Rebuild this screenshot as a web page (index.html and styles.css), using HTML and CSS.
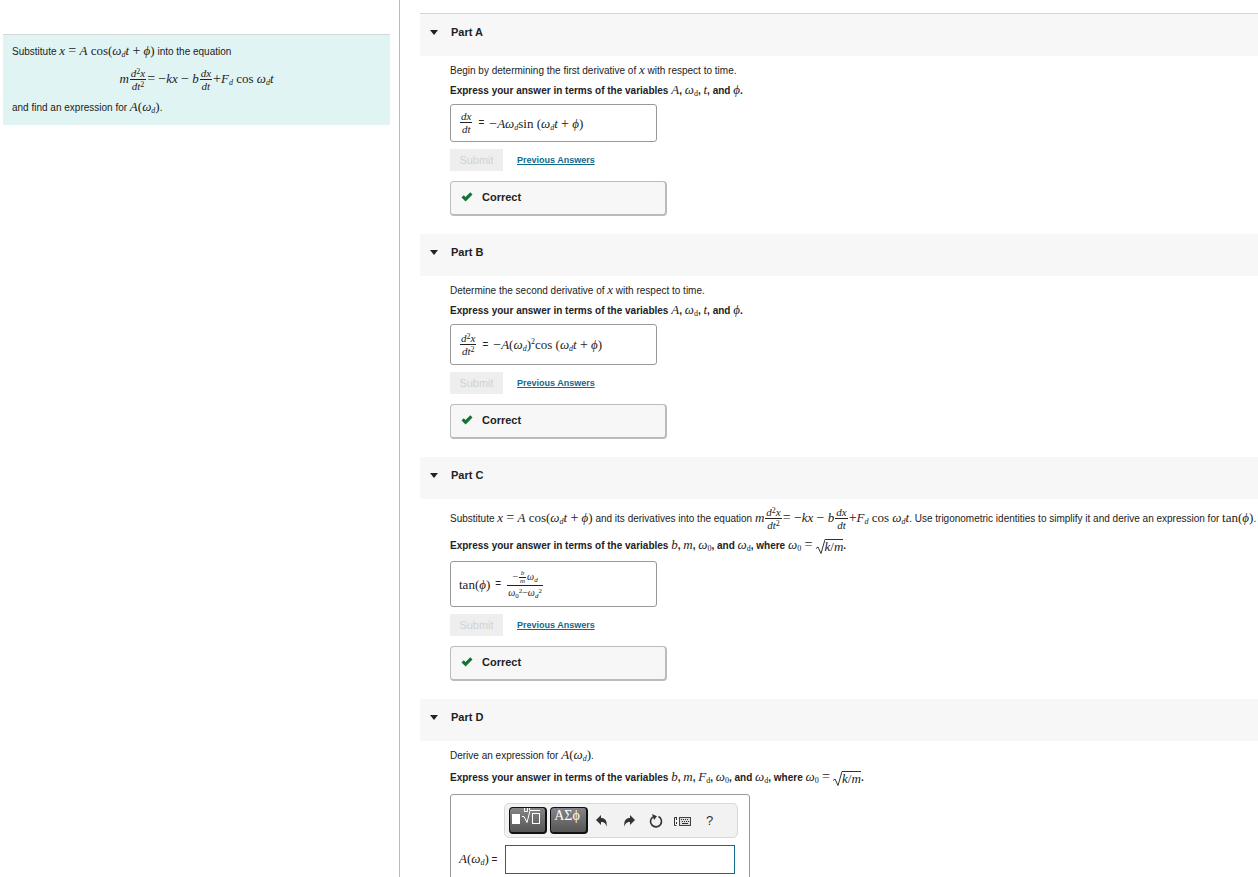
FILE: index.html
```html
<!DOCTYPE html>
<html lang="en">
<head>
    <meta charset="UTF-8">
    <meta name="viewport" content="width=device-width, initial-scale=1.0">
    <title>Driven Oscillator</title>
    <link rel="stylesheet" href="styles.css">
</head>
<body>

    <div class="page">
        <aside class="problem">
            <div class="intro">
                <p>Substitute <span class="math"><i>x</i> <b>=</b> <i>A</i> cos(<i>ω<sub>d</sub>t</i> <b>+</b> <i>ϕ</i>)</span> into the equation</p>
                <p class="equation"><span class="math"><i>m</i><span class="frac"><span><i>d</i><sup>2</sup><i>x</i></span><span><i>dt</i><sup>2</sup></span></span><b>=</b> <b>−</b><i>kx</i> <b>−</b> <i>b</i><span class="frac"><i>dx</i><i>dt</i></span><b>+</b><i>F<sub>d</sub></i> cos <i>ω<sub>d</sub>t</i></span></p>
                <p>and find an expression for <span class="math"><i>A</i>(<i>ω<sub>d</sub></i>)</span>.</p>
            </div>
        </aside>

        <main class="parts">
            <section class="part">
                <h2><button class="toggle" type="button"><span class="arrow"></span>Part A</button></h2>
                <div class="part-body">
                    <p>Begin by determining the first derivative of <span class="math"><i>x</i></span> with respect to time.</p>
                    <p class="hint">Express your answer in terms of the variables <span class="math"><i>A</i></span>, <span class="math"><i>ω</i><sub>d</sub></span>, <span class="math"><i>t</i></span>, and <span class="math"><i>ϕ</i></span>.</p>
                    <div class="answer short">
                        <span class="math"><span class="frac"><i>dx</i><i>dt</i></span></span>
                        <span class="eq">=</span>
                        <span class="math"><b>−</b><i>Aω<sub>d</sub></i>sin (<i>ω<sub>d</sub>t</i> <b>+</b> <i>ϕ</i>)</span>
                    </div>
                    <div class="actions">
                        <button class="submit" type="button" disabled>Submit</button>
                        <a href="#">Previous Answers</a>
                    </div>
                    <div class="feedback">
                        <svg class="check" viewBox="0 0 12 10"><path d="M.5 5.500 2.700 3.300 4.500 5 9.300.3 11.500 2.500 4.600 9.500z"/></svg>
                        Correct
                    </div>
                </div>
            </section>

            <section class="part">
                <h2><button class="toggle" type="button"><span class="arrow"></span>Part B</button></h2>
                <div class="part-body">
                    <p>Determine the second derivative of <span class="math"><i>x</i></span> with respect to time.</p>
                    <p class="hint">Express your answer in terms of the variables <span class="math"><i>A</i></span>, <span class="math"><i>ω</i><sub>d</sub></span>, <span class="math"><i>t</i></span>, and <span class="math"><i>ϕ</i></span>.</p>
                    <div class="answer medium">
                        <span class="math"><span class="frac"><span><i>d</i><sup>2</sup><i>x</i></span><span><i>dt</i><sup>2</sup></span></span></span>
                        <span class="eq">=</span>
                        <span class="math"><b>−</b><i>A</i>(<i>ω<sub>d</sub></i>)<sup>2</sup>cos (<i>ω<sub>d</sub>t</i> <b>+</b> <i>ϕ</i>)</span>
                    </div>
                    <div class="actions">
                        <button class="submit" type="button" disabled>Submit</button>
                        <a href="#">Previous Answers</a>
                    </div>
                    <div class="feedback">
                        <svg class="check" viewBox="0 0 12 10"><path d="M.5 5.500 2.700 3.300 4.500 5 9.300.3 11.500 2.500 4.600 9.500z"/></svg>
                        Correct
                    </div>
                </div>
            </section>

            <section class="part">
                <h2><button class="toggle" type="button"><span class="arrow"></span>Part C</button></h2>
                <div class="part-body">
                    <p class="tall">Substitute <span class="math"><i>x</i> <b>=</b> <i>A</i> cos(<i>ω<sub>d</sub>t</i> <b>+</b> <i>ϕ</i>)</span> and its derivatives into the equation <span class="math"><i>m</i><span class="frac"><span><i>d</i><sup>2</sup><i>x</i></span><span><i>dt</i><sup>2</sup></span></span><b>=</b> <b>−</b><i>kx</i> <b>−</b> <i>b</i><span class="frac"><i>dx</i><i>dt</i></span><b>+</b><i>F<sub>d</sub></i> cos <i>ω<sub>d</sub>t</i></span>. Use trigonometric identities to simplify it and derive an expression for <span class="math">tan(<i>ϕ</i>)</span>.</p>
                    <p class="hint roots">Express your answer in terms of the variables <span class="math"><i>b</i></span>, <span class="math"><i>m</i></span>, <span class="math"><i>ω</i><sub>0</sub></span>, and <span class="math"><i>ω</i><sub>d</sub></span>, where <span class="math"><i>ω</i><sub>0</sub> <b>=</b> <svg class="radical" viewBox="0 0 9 15"><path d="M0 9.500 2 8 5 14.500 9 .5"/></svg><span class="root"><i>k</i>/<i>m</i></span></span>.</p>
                    <div class="answer large">
                        <span class="math">tan(<i>ϕ</i>)</span>
                        <span class="eq">=</span>
                        <span class="math small"><span class="frac"><span>−<span class="frac tiny"><i>b</i><i>m</i></span><i>ω<sub>d</sub></i></span><span><i>ω</i><sub>0</sub><sup>2</sup>−<i>ω<sub>d</sub></i><sup>2</sup></span></span></span>
                    </div>
                    <div class="actions">
                        <button class="submit" type="button" disabled>Submit</button>
                        <a href="#">Previous Answers</a>
                    </div>
                    <div class="feedback">
                        <svg class="check" viewBox="0 0 12 10"><path d="M.5 5.500 2.700 3.300 4.500 5 9.300.3 11.500 2.500 4.600 9.500z"/></svg>
                        Correct
                    </div>
                </div>
            </section>

            <section class="part">
                <h2><button class="toggle" type="button"><span class="arrow"></span>Part D</button></h2>
                <div class="part-body">
                    <p>Derive an expression for <span class="math"><i>A</i>(<i>ω<sub>d</sub></i>)</span>.</p>
                    <p class="hint roots">Express your answer in terms of the variables <span class="math"><i>b</i></span>, <span class="math"><i>m</i></span>, <span class="math"><i>F</i><sub>d</sub></span>, <span class="math"><i>ω</i><sub>0</sub></span>, and <span class="math"><i>ω</i><sub>d</sub></span>, where <span class="math"><i>ω</i><sub>0</sub> <b>=</b> <svg class="radical" viewBox="0 0 9 15"><path d="M0 9.500 2 8 5 14.500 9 .5"/></svg><span class="root"><i>k</i>/<i>m</i></span></span>.</p>
                    <div class="editor">
                        <div class="toolbar">
                            <button class="palette" type="button" aria-label="Templates">
                                <svg width="32" height="20" viewBox="0 0 32 20">
                                    <rect x="2" y="6" width="8" height="10" fill="#fff"/>
                                    <path d="M12 8.500h2l3 6 3-12h10M14.500 0v3.500h3V0M19.500 0v2" fill="none" stroke="#fff"/>
                                    <rect x="22.500" y="5.500" width="7" height="10" fill="none" stroke="#fff"/>
                                </svg>
                            </button>
                            <button class="palette" type="button">ΑΣϕ</button>
                            <button class="tool" type="button" aria-label="Undo">
                                <svg width="12" height="12" viewBox="0 0 12 12"><path d="M5 0v3c4 0 6.500 2.500 5.500 9C10 8.500 8.500 7 5 7v3L0 5z"/></svg>
                            </button>
                            <button class="tool" type="button" aria-label="Redo">
                                <svg width="12" height="12" viewBox="0 0 12 12"><path d="M7 0v3C3 3 .5 5.500 1.500 12 2 8.500 3.500 7 7 7v3l5-5z"/></svg>
                            </button>
                            <button class="tool" type="button" aria-label="Reset">
                                <svg width="14" height="14" viewBox="0 0 14 14"><path d="M9.500 2.500A5.500 5.500 0 1 1 4 2.800" fill="none" stroke="#333" stroke-width="1.600"/><path d="M3 0l5 2.200L5 6z"/></svg>
                            </button>
                            <button class="tool" type="button" aria-label="Keyboard shortcuts">
                                <svg width="19" height="12" viewBox="0 0 19 12"><path d="M3.500 2.500h-2v8h2M3.500 2v3M3.500 7v2" fill="none" stroke="#333"/><rect x="6.500" y="2.500" width="11" height="8" fill="#ddd" stroke="#444"/><path d="M8 4.500h8M9 6.500h8" stroke="#333" stroke-dasharray="1 1"/><path d="M9 8.500h6" stroke="#333"/></svg>
                            </button>
                            <button class="tool" type="button" aria-label="Help">?</button>
                        </div>
                        <label for="amplitude"><span class="math"><i>A</i>(<i>ω<sub>d</sub></i>)</span> <span class="eq">=</span></label>
                        <input id="amplitude" type="text">
                    </div>
                </div>
            </section>
        </main>
    </div>

</body>
</html>
```
FILE: styles.css
```css
* {
    box-sizing: border-box;
}

body {
    margin: 0;
    font-family: "Liberation Sans", Arial, sans-serif;
    font-size: 10px;
    line-height: 20px;
    color: #222;
    background: #fff;
}

p, h2 {
    margin: 0;
}

.page {
    display: grid;
    grid-template-columns: 400px 1fr;
    height: 100vh;
}

.problem {
    padding: 34px 9px 0 3px;
    border-right: 1px solid #b8bcc4;
}

.intro {
    padding: 7px 9px;
    border-top: 1px solid #d4d9d9;
    background: #e1f4f4;
}

.equation {
    padding: 4px 0;
    line-height: 28px;
    text-align: center;
}

.parts {
    min-width: 0;
    padding: 13px 0 0 20px;
    overflow-y: auto;
    scrollbar-width: none;
}

.part:first-child {
    border-top: 1px solid #d5d5d5;
}

.toggle {
    display: flex;
    align-items: center;
    gap: 13px;
    width: 100%;
    height: 42px;
    padding: 0 0 6px 10px;
    border: none;
    background: #f7f7f7;
    font-family: inherit;
    font-size: 11px;
    font-weight: bold;
    color: #222;
    cursor: pointer;
}

.arrow {
    border: 4px solid transparent;
    border-top: 5px solid #222;
    border-bottom: none;
}

.part-body {
    padding: 5px 0 18px 30px;
}

.hint {
    font-weight: bold;
}

.tall {
    line-height: 30px;
    white-space: nowrap;
}

.roots {
    line-height: 24px;
}

/* math */

.math {
    font-family: "Liberation Serif", "Times New Roman", serif;
    font-size: 13px;
    font-weight: normal;
    line-height: 1;
    white-space: nowrap;
}

.math b {
    font-size: 14px;
    font-weight: normal;
    line-height: 0;
}

.math sub,
.math sup {
    font-size: 8px;
    line-height: 0;
}

.math sub {
    vertical-align: -2px;
}

.math sup {
    vertical-align: 5px;
}

.frac {
    display: inline-flex;
    flex-direction: column;
    align-items: center;
    margin: 0 1px;
    vertical-align: middle;
    font-size: 11px;
    line-height: 11px;
}

.frac > * {
    padding: 0 1px;
}

.frac > :last-child {
    align-self: stretch;
    padding-top: 1px;
    border-top: 1px solid #222;
    text-align: center;
}

.frac sup {
    vertical-align: 3px;
}

.small .frac {
    font-size: 10px;
}

.small .tiny {
    font-size: 7px;
    line-height: 7px;
}

.small .tiny > :last-child {
    padding-top: 0;
}

.small sub,
.small sup {
    font-size: 7px;
}

.radical {
    width: 9px;
    height: 15px;
    vertical-align: middle;
    fill: none;
    stroke: #333;
}

.root {
    display: inline-block;
    height: 15px;
    border-top: 1px solid #333;
    vertical-align: middle;
    line-height: 14px;
}

/* answers */

.answer {
    display: flex;
    align-items: center;
    gap: 5px;
    width: 207px;
    margin-top: 3px;
    padding: 0 8px;
    border: 1px solid #999;
    border-radius: 3px;
}

.short {
    height: 38px;
}

.medium {
    height: 41px;
}

.large {
    height: 46px;
}

.actions {
    display: flex;
    align-items: center;
    gap: 14px;
    margin: 7px 0 10px;
}

.submit {
    width: 53px;
    height: 22px;
    padding: 0;
    border: none;
    background: #eee;
    font-family: inherit;
    font-size: 11px;
    color: #d2d2d2;
}

.actions a {
    font-size: 9px;
    font-weight: bold;
    color: #106a8c;
}

.feedback {
    display: flex;
    align-items: center;
    gap: 9px;
    width: 217px;
    height: 35px;
    padding: 0 10px 2px;
    border: 1px solid #bbb;
    border-right-width: 2px;
    border-bottom-width: 2px;
    border-radius: 4px;
    background: #f7f7f7;
    font-size: 11px;
    font-weight: bold;
}

.check {
    width: 12px;
    height: 10px;
    fill: #137333;
}

/* equation editor */

.editor {
    display: grid;
    grid-template-columns: 46px 230px;
    align-items: center;
    row-gap: 7px;
    width: 300px;
    margin-top: 4px;
    padding: 8px 8px 20px;
    border: 1px solid #999;
    border-radius: 3px;
}

.toolbar {
    grid-column: 2;
    display: flex;
    align-items: center;
    width: 234px;
    height: 35px;
    margin-left: -1px;
    padding: 0 4px;
    border: 1px solid #d8d8d8;
    border-radius: 5px;
    background: #f2f2f2;
}

.palette {
    display: flex;
    align-items: flex-start;
    justify-content: center;
    width: 38px;
    height: 27px;
    padding: 0 3px 0 0;
    border: 1px solid #111;
    border-right-width: 2px;
    border-bottom-width: 2px;
    border-radius: 4px;
    background: linear-gradient(#858589, #555);
    font-family: "Liberation Serif", serif;
    font-size: 14px;
    line-height: 16px;
    color: #fff;
}

.palette + .palette {
    margin-left: 3px;
}

.tool {
    display: flex;
    align-items: center;
    justify-content: center;
    width: 27px;
    height: 26px;
    padding: 0;
    border: none;
    background: none;
    font-family: inherit;
    font-size: 13px;
    color: #333;
    fill: #333;
}

.editor input {
    width: 230px;
    height: 29px;
    border: 1px solid #106a8c;
    background: #fff;
}
```
